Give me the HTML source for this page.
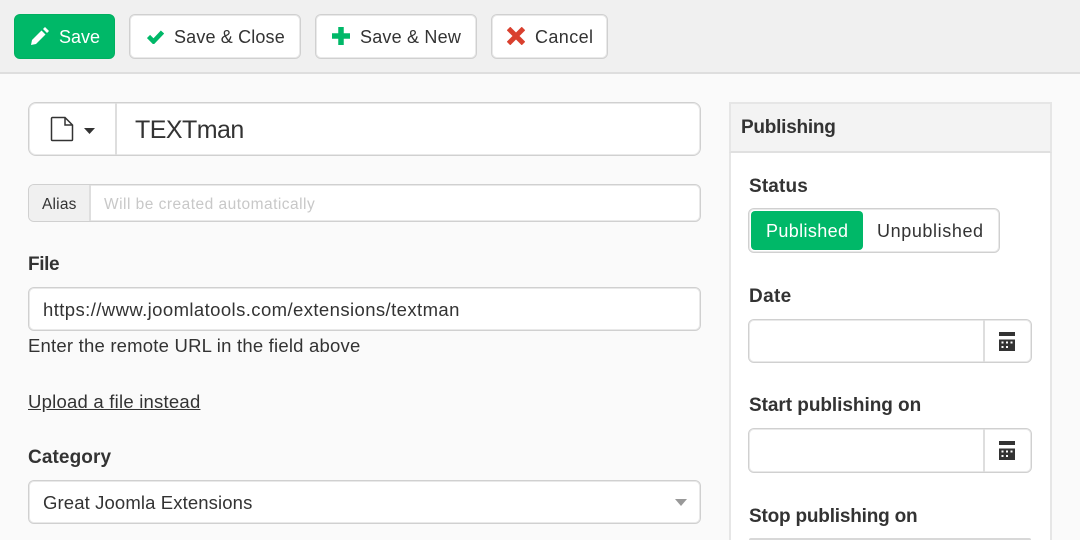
<!DOCTYPE html>
<html style="height:540px;overflow:hidden"><head><meta charset="utf-8"><style>
html,body{margin:0;padding:0}
body{width:1080px;height:540px;overflow:hidden;background:#fafafa;font-family:"Liberation Sans",sans-serif;color:#333}
#w{position:relative;width:1080px;height:540px;overflow:hidden;background:#fafafa}
.b{position:absolute;box-sizing:border-box;border:1px solid #d0d0d0;box-shadow:inset 0 0 0 1px #e9e9e9;border-radius:6px;background:#fff}
.t{position:absolute;white-space:nowrap;font-size:18px;line-height:24px;letter-spacing:.2px}
.l{font-weight:700;font-size:19px;color:#333;letter-spacing:.1px}
.d{position:absolute;width:2px;background:#dedede}
svg{position:absolute;display:block}
</style></head><body><div id="w">
<div style="position:absolute;left:0;top:0;width:1080px;height:74px;background:#f0f0f0;border-bottom:2px solid #dedede;box-sizing:border-box"></div>

<div class="b" style="left:14px;top:14px;width:101px;height:45px;background:#00b868;border-color:#00b060;box-shadow:none"></div>
<svg style="left:31px;top:27px" width="18" height="18" viewBox="0 0 18 18"><path d="M0 18l1-5L10.500 3.500l4 4L5 17zM12 2l2-2 4 4-2 2z" fill="#fff"/></svg>
<div class="t" style="left:59px;top:25px;color:#fff;letter-spacing:0">Save</div>

<div class="b" style="left:129px;top:14px;width:172px;height:45px"></div>
<svg style="left:147px;top:30px" width="17" height="14" viewBox="0 0 17 14"><path d="M1.500 6.500l5 5L15.500 2" fill="none" stroke="#00b868" stroke-width="4.500"/></svg>
<div class="t" style="left:174px;top:25px;letter-spacing:.15px">Save &amp; Close</div>

<div class="b" style="left:315px;top:14px;width:162px;height:45px"></div>
<svg style="left:332px;top:27px" width="18" height="18" viewBox="0 0 18 18"><path d="M9 0v18M0 9h18" stroke="#00b868" stroke-width="5.500"/></svg>
<div class="t" style="left:360px;top:25px;letter-spacing:.2px">Save &amp; New</div>

<div class="b" style="left:491px;top:14px;width:117px;height:45px"></div>
<svg style="left:507px;top:27px" width="18" height="18" viewBox="0 0 18 18"><path d="M1.500 1.500l15 15M16.500 1.500l-15 15" stroke="#d9402e" stroke-width="5"/></svg>
<div class="t" style="left:535px;top:25px;letter-spacing:.4px">Cancel</div>

<div class="b" style="left:28px;top:102px;width:673px;height:54px;border-radius:8px"></div>
<div class="d" style="left:115px;top:103px;height:52px"></div>
<svg style="left:50px;top:116px" width="24" height="26" viewBox="0 0 24 26"><path d="M2.500 1.500h12.500l7.500 7.500v14.500a1 1 0 0 1-1 1h-19a1 1 0 0 1-1-1v-21a1 1 0 0 1 1-1zM15 1.500V9h7.500" fill="#fff" stroke="#333" stroke-width="1.500"/></svg>
<svg style="left:84px;top:128px" width="11" height="6" viewBox="0 0 11 6"><path d="M0 0h11L5.500 6z" fill="#333"/></svg>
<div class="t" style="left:135px;top:115px;font-size:25px;line-height:30px;letter-spacing:-.55px">TEXTman</div>

<div class="b" style="left:28px;top:184px;width:673px;height:38px"></div>
<div style="position:absolute;left:29px;top:185px;width:60px;height:36px;background:#f0f0f0;border-radius:5px 0 0 5px;border-right:2px solid #dedede"></div>
<div class="t" style="left:42px;top:193px;font-size:15.500px;letter-spacing:.2px">Alias</div>
<div class="t" style="left:104px;top:193px;font-size:15.500px;color:#c8c8c8;letter-spacing:.48px">Will be created automatically</div>

<div class="t l" style="left:28px;top:253px;letter-spacing:-.4px">File</div>
<div class="b" style="left:28px;top:287px;width:673px;height:44px"></div>
<div class="t" style="left:43px;top:298px;font-size:18.500px;letter-spacing:.41px">https://www.joomlatools.com/extensions/textman</div>
<div class="t" style="left:28px;top:334px;font-size:18.500px;letter-spacing:.21px">Enter the remote URL in the field above</div>
<div class="t" style="left:28px;top:390px;font-size:18.500px;letter-spacing:.23px;text-decoration:underline">Upload a file instead</div>

<div class="t l" style="left:28px;top:446px;letter-spacing:.1px">Category</div>
<div class="b" style="left:28px;top:480px;width:673px;height:44px"></div>
<div class="t" style="left:43px;top:491px;font-size:18.500px;letter-spacing:.12px">Great Joomla Extensions</div>
<svg style="left:675px;top:499px" width="12" height="7" viewBox="0 0 12 7"><path d="M0 0h12L6 7z" fill="#999"/></svg>

<div style="position:absolute;left:729px;top:102px;width:323px;height:438px;box-sizing:border-box;border:2px solid #e6e6e6;border-bottom:0;background:#fff"></div>
<div style="position:absolute;left:729px;top:102px;width:323px;height:51px;box-sizing:border-box;border:2px solid #e6e6e6;border-bottom-color:#e0e0e0;background:#f3f3f3"></div>
<div class="t l" style="left:741px;top:116px;letter-spacing:-.25px">Publishing</div>

<div class="t l" style="left:749px;top:175px;letter-spacing:.15px">Status</div>
<div class="b" style="left:748px;top:208px;width:252px;height:45px"></div>
<div style="position:absolute;left:751px;top:211px;width:112px;height:39px;background:#00b868;border-radius:4px"></div>
<div class="t" style="left:766px;top:219px;color:#fff;letter-spacing:.37px">Published</div>
<div class="t" style="left:877px;top:219px;letter-spacing:.6px">Unpublished</div>

<div class="t l" style="left:749px;top:285px;letter-spacing:.35px">Date</div>
<div class="b" style="left:748px;top:319px;width:284px;height:44px"></div>
<div class="d" style="left:983px;top:320px;height:42px"></div>
<svg style="left:999px;top:332px" width="16" height="19" viewBox="0 0 16 19"><path fill="#333" fill-rule="evenodd" d="M0 0h16v4H0zM0 7.500h16V19H0zM2.500 9.500v2h2v-2zM7 9.500v2h2v-2zM11.500 9.500v2h2v-2zM2.500 14v2h2v-2zM7 14v2h2v-2z"/></svg>

<div class="t l" style="left:749px;top:394px;letter-spacing:-.05px">Start publishing on</div>
<div class="b" style="left:748px;top:428px;width:284px;height:45px"></div>
<div class="d" style="left:983px;top:429px;height:43px"></div>
<svg style="left:999px;top:441px" width="16" height="19" viewBox="0 0 16 19"><path fill="#333" fill-rule="evenodd" d="M0 0h16v4H0zM0 7.500h16V19H0zM2.500 9.500v2h2v-2zM7 9.500v2h2v-2zM11.500 9.500v2h2v-2zM2.500 14v2h2v-2zM7 14v2h2v-2z"/></svg>

<div class="t l" style="left:749px;top:505px;letter-spacing:-.2px">Stop publishing on</div>
<div style="position:absolute;left:749px;top:538px;width:282px;height:2px;background:#d8d8d8;border-radius:3px 3px 0 0"></div>
</div></body></html>
